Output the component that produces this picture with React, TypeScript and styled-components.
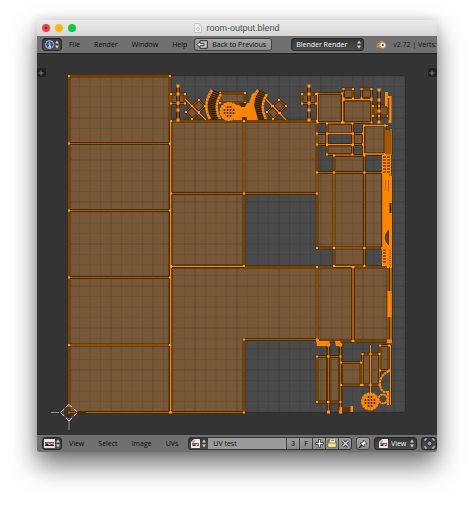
import React from "react";
import styled, { createGlobalStyle } from "styled-components";

const GlobalStyle = createGlobalStyle`
  * { box-sizing: border-box; }
  body { margin: 0; background: #fff; font-family: "Open Sans", "Noto Sans", sans-serif; }
  button, input, select { font: inherit; color: inherit; margin: 0; padding: 0; }
`;

const Page = styled.main`
  padding: 20px 37px 52px;
  overflow: hidden;
`;

const Window = styled.section`
  display: flex;
  flex-direction: column;
  border-radius: 4px 4px 2px 2px;
  box-shadow: 0 13px 26px rgba(0, 0, 0, 0.55), 0 0 10px rgba(0, 0, 0, 0.15);
`;

const TitleBar = styled.header`
  display: grid;
  grid-template-columns: 1fr auto 1fr;
  align-items: center;
  height: 16px;
  padding: 0 5px;
  border-radius: 4px 4px 0 0;
  background: linear-gradient(#ebebeb, #d6d6d6);
  font-family: "Liberation Sans", Arial, sans-serif;
`;

const Lights = styled.div`
  display: flex;
  gap: 5px;
`;

const Light = styled.button<{ $color: string }>`
  display: grid;
  place-items: center;
  width: 8px;
  height: 8px;
  border: 0;
  border-radius: 50%;
  background: ${(p) => p.$color};
`;

const EditedDot = styled.span`
  width: 2px;
  height: 2px;
  border-radius: 50%;
  background: #6b0d12;
`;

const Title = styled.h1`
  display: flex;
  align-items: center;
  gap: 4px;
  margin: 0;
  font-size: 9px;
  line-height: 12px;
  font-weight: 400;
  color: #4c4c4c;
`;

const Bar = styled.div<{ $bottom?: boolean }>`
  display: flex;
  align-items: center;
  height: ${(p) => (p.$bottom ? 17 : 18)}px;
  padding-left: 5px;
  overflow: hidden;
  white-space: nowrap;
  font-size: 7px;
  line-height: 10px;
  color: #0c0c0c;
  background: #707070;
  border-bottom: ${(p) => (p.$bottom ? "0" : "1px solid #222")};
  border-radius: ${(p) => (p.$bottom ? "0 0 2px 2px" : "0")};
`;

const Menus = styled.nav`
  display: flex;
  flex: none;
  gap: 14px;
  padding: 0 7px;
`;

const MenuButton = styled.button`
  border: 0;
  background: none;
`;

const DarkButton = styled.button<{ $width?: number }>`
  display: flex;
  flex: none;
  align-items: center;
  justify-content: space-evenly;
  width: ${(p) => p.$width ?? 20}px;
  height: 13px;
  border: 1px solid #262626;
  border-radius: 3px;
  background: linear-gradient(#3a3a3a, #505050);
`;

const SelectBox = styled.label<{ $width: number }>`
  display: flex;
  flex: none;
  align-items: center;
  gap: 3px;
  width: ${(p) => p.$width}px;
  height: 13px;
  padding: 0 2px 0 4px;
  border: 1px solid #262626;
  border-radius: 3px;
  background: linear-gradient(#363636, #4c4c4c);
  color: #f4f4f4;
`;

const Select = styled.select`
  flex: 1;
  min-width: 0;
  height: 11px;
  border: 0;
  appearance: none;
  background: none;
  line-height: 10px;
`;

const LightButton = styled.button`
  display: flex;
  flex: none;
  align-items: center;
  justify-content: center;
  gap: 4px;
  height: 13px;
  padding: 0 5px 0 1px;
  border: 1px solid #434343;
  border-radius: 3px;
  background: linear-gradient(#a3a3a3, #8c8c8c);
`;

const Engine = styled.div`
  display: flex;
  flex: none;
  padding: 0 12px 0 19px;
`;

const Stats = styled.div`
  display: flex;
  align-items: center;
  gap: 6px;
  color: #161616;
`;

const DataBlock = styled.div`
  display: flex;
  flex: 1;
  min-width: 0;
  height: 13px;
  margin-left: 3px;
  border: 1px solid #333;
  border-radius: 3px;
  overflow: hidden;
  background: #424242;
`;

const Browse = styled.button`
  display: flex;
  flex: none;
  align-items: center;
  justify-content: space-evenly;
  width: 19px;
  border: 0;
  background: linear-gradient(#363636, #4c4c4c);
`;

const NameInput = styled.input`
  flex: 1;
  min-width: 0;
  padding-left: 5px;
  border: 0;
  background: #9b9b9b;
`;

const Cell = styled.button`
  display: grid;
  flex: none;
  place-items: center;
  width: 13px;
  border: 0;
  border-left: 1px solid #444;
  background: linear-gradient(#9c9c9c, #888);
`;

const FooterTools = styled.div`
  display: flex;
  flex: none;
  gap: 4px;
  padding-left: 4px;
`;

const PinButton = styled(LightButton)`
  width: 14px;
  padding: 0;
`;

const Canvas = styled.svg`
  display: block;
  width: 100%;
  height: auto;
  background: #343434;
`;

type Box = [number, number, number, number];
type Point = [number, number];

const faces: Box[] = [
  [69, 76, 170, 143.5], [69, 143.5, 170, 210.5], [69, 210.5, 170, 277.5],
  [69, 277.5, 170, 345], [69, 345, 170, 412.5],
  [171, 121, 244, 193.5], [244, 121, 317, 193.5], [171, 193.5, 244, 266],
  [317, 267, 352.5, 341], [353.5, 267, 388, 341], [388, 267, 391, 341],
  [317, 172.5, 334, 248], [334, 155.5, 364.5, 172.5], [334, 172.5, 364.5, 248],
  [334, 248, 364.5, 266], [364.5, 172.5, 382.5, 248],
  [317.5, 93.5, 342, 122.5], [343.5, 100, 371.5, 122.5],
  [343.5, 89, 353, 98.5], [361.5, 89, 371.5, 98.5],
  [373, 106, 379, 116], [379, 106, 388, 116],
  [327, 123.5, 352.5, 133.5], [317, 133.5, 327, 144.5], [353, 133.5, 363, 144.5],
  [327, 145, 352.5, 154.5], [364, 125.5, 385, 154.5],
  [171, 94, 178, 103.5], [178, 94, 185, 103.5],
  [302, 94, 309, 103.5], [309, 94, 316, 103.5],
  [220, 93, 245, 103],
  [317, 356.5, 328, 402], [328.5, 356.5, 340.5, 402], [341, 362.5, 361, 385],
  [362.5, 354, 370.5, 385], [370.5, 354, 379.5, 385], [380, 345.5, 389, 370.5],
];

const polygons: Point[][] = [
  [[171, 267], [317, 267], [317, 339.5], [244, 339.5], [244, 412.5], [171, 412.5]],
  [[199, 100], [205, 106], [199, 112], [192, 106]],
  [[186, 112], [192, 106], [199, 113], [192, 119]],
  [[279, 100], [286, 106], [279, 113], [272, 106]],
  [[267, 112], [273, 106], [280, 113], [273, 119]],
];

const posts: Box[] = [
  [178, 86, 178, 120], [309, 86, 309, 120], [379, 90, 379, 122],
  [328.5, 345, 328.5, 412], [340.5, 345, 340.5, 412],
];

const postJoints: Point[] = [
  ...[86, 94, 103, 110, 120].flatMap((y): Point[] => [[178, y], [309, y]]),
  ...[90, 100, 111, 122].map((y): Point => [379, y]),
  [328.5, 345], [328.5, 412], [340.5, 345], [340.5, 412],
];

const brightLines = [
  "M170.7 121V412", "M171 266.4H244", "M334 266.4H353", "M185 99L206 120", "M266 99L286 120",
  "M317.5 93V122", "M342.7 93V123", "M344 99.5H372", "M327 133.5H353V144.7H327Z",
  "M363.5 125V154H391", "M364 125.5H388", "M370.5 345V395", "M390.4 345V405",
  "M391 267V341", "M391 129V155", "M391 176V267",
];

const ladder = (from: number, to: number) => {
  const rungs: number[] = [];
  for (let y = from; y <= to; y += 3) rungs.push(y);
  return rungs;
};

const gridLines = Array.from({ length: 33 }, (_, i) => i);
const fanSteps = Array.from({ length: 15 }, (_, i) => i / 14);

const Arrows = () => (
  <svg width="4" height="9" viewBox="0 0 4 9" aria-hidden="true">
    <path d="M0 3.5L2 .5L4 3.5ZM0 5.5L2 8.5L4 5.5Z" fill="#d0d0d0" />
  </svg>
);

const InfoIcon = () => (
  <svg width="9" height="9" viewBox="0 0 9 9" aria-hidden="true">
    <circle cx="4.5" cy="4.5" r="4" fill="#28538c" stroke="#a9c5e8" />
    <path d="M4.5 1.8V3M3.5 4H4.7V7M3.2 7H6" stroke="#fff" strokeWidth="1.1" />
  </svg>
);

const ImageEditorIcon = () => (
  <svg width="11" height="9" viewBox="0 0 11 9" aria-hidden="true">
    <rect x=".5" y=".5" width="10" height="8" fill="#f0e8e8" stroke="#dedede" />
    <path d="M1 3H10V5L8 4L6 5L4 4L1 5Z" fill="#934354" />
    <path d="M1 6L3 4L5 6L8 5L10 6V7H1Z" fill="#222" />
  </svg>
);

const ImageIcon = () => (
  <svg width="9" height="9" viewBox="0 0 9 9" aria-hidden="true">
    <path d="M3 .5H8.5V8.5H.5V3Z" fill="#e9e2e2" stroke="#eee" />
    <path d="M3 .5V3H.5" fill="none" stroke="#777" strokeWidth=".7" />
    <path d="M1 4H8V6L6 5L4 6L2 5L1 6Z" fill="#a54c5b" />
    <path d="M1 7L3 5L5 7L7 6L8 7Z" fill="#252525" />
  </svg>
);

const BackIcon = () => (
  <svg width="12" height="9" viewBox="0 0 12 9" aria-hidden="true">
    <path d="M4 2V.7H11.3V8.3H4V7" fill="#c6c6c6" stroke="#222" strokeWidth=".9" />
    <path d="M.7 4.5L4 1.8V3.4H8V5.6H4V7.2Z" fill="#eee" stroke="#222" strokeWidth=".8" />
  </svg>
);

const BlenderIcon = () => (
  <svg width="11" height="9" viewBox="0 0 11 9" aria-hidden="true">
    <path d="M.3 6.9L3.4 4.2H1.2V3H5L3.8 1.6L5 .6L9 3A3.6 3.2 0 1 1 3.2 6.4L1.3 7.8Z" fill="#ee9448" />
    <circle cx="6.8" cy="5.2" r="2.3" fill="#fff" />
    <circle cx="6.9" cy="5.2" r="1.1" fill="#275d91" />
  </svg>
);

const DocumentIcon = () => (
  <svg width="8" height="10" viewBox="0 0 8 10" aria-hidden="true">
    <path d="M.5.5H5L7.5 3V9.5H.5Z" fill="#f5f3ef" stroke="#b9b5af" strokeWidth=".7" />
    <path d="M5 .5V3H7.5" fill="none" stroke="#b9b5af" strokeWidth=".6" />
    <circle cx="4" cy="6" r="1.4" fill="none" stroke="#dfb18a" />
  </svg>
);

const PlusIcon = () => (
  <svg width="9" height="9" viewBox="0 0 9 9" aria-hidden="true">
    <path d="M3.5.5H5.5V3.5H8.5V5.5H5.5V8.5H3.5V5.5H.5V3.5H3.5Z" fill="#eee" stroke="#333" strokeWidth=".8" />
  </svg>
);

const FolderIcon = () => (
  <svg width="10" height="9" viewBox="0 0 10 9" aria-hidden="true">
    <path d="M1 3V1H4L5 2H9V8H1Z" fill="#b99d52" stroke="#4d4528" strokeWidth=".7" />
    <path d="M.5 4H9.5L8.8 8.5H1.2Z" fill="#efdf96" stroke="#65592d" strokeWidth=".6" />
    <path d="M3 .5H8V3.5H3Z" fill="#f4edd0" />
    <path d="M4 1.5H7" stroke="#555" strokeWidth=".7" />
  </svg>
);

const CloseIcon = () => (
  <svg width="9" height="9" viewBox="0 0 9 9" aria-hidden="true">
    <path d="M1.5 1.5L7.5 7.5M7.5 1.5L1.5 7.5" stroke="#222" strokeWidth="3" />
    <path d="M1.5 1.5L7.5 7.5M7.5 1.5L1.5 7.5" stroke="#eee" strokeWidth="1.4" />
  </svg>
);

const PinIcon = () => (
  <svg width="10" height="10" viewBox="0 0 10 10" aria-hidden="true">
    <path d="M1 9L4 6" stroke="#222" strokeWidth="1.2" />
    <path d="M5.5 1L9 4.5L7.5 4.7L6 6.3V8L2 4H3.8L5.3 2.5Z" fill="#eee" stroke="#222" strokeWidth=".7" />
  </svg>
);

const PivotIcon = () => (
  <svg width="11" height="11" viewBox="0 0 11 11" aria-hidden="true">
    <path d="M1 3V1H3M8 1H10V3M10 8V10H8M3 10H1V8" fill="none" stroke="#ccc" />
    <circle cx="5.5" cy="5.5" r="2.5" fill="#879fc0" stroke="#17243a" />
  </svg>
);

const Vertices = ({ points, size = 1.6 }: { points: Point[]; size?: number }) => (
  <path
    d={points.map(([x, y]) => `M${x - size / 2} ${y - size / 2}h${size}v${size}h-${size}z`).join("")}
    fill="#ff9a2c"
  />
);

const discCells = [-4.5, -1.5, 1.5, 4.5];

const GridDisc = ({ cx, cy, r }: { cx: number; cy: number; r: number }) => (
  <g>
    <circle cx={cx} cy={cy} r={r} fill="#f58208" stroke="#ff8c0a" strokeWidth="2" strokeDasharray="2.5 .6" />
    {discCells.flatMap((dx) =>
      discCells
        .filter((dy) => Math.abs(dx) + Math.abs(dy) < 8.5)
        .map((dy) => (
          <rect key={`${dx} ${dy}`} x={cx + dx - 0.8} y={cy + dy - 0.9} width="1.6" height="1.8" fill="#4a2900" />
        ))
    )}
  </g>
);

const Fan = ({ x }: { x: number }) => (
  <g transform={`translate(${x} 90)`}>
    <path d="M6 0Q-2 15 4 29L14 29Q7 16 15 4Z" fill="#6b4216" />
    {fanSteps.map((t) => {
      const bend = 4 * t * (1 - t);
      return (
        <path
          key={t}
          d={`M${6 - 2 * t - bend * 4} ${t * 29}L${15 - t - bend * 4} ${4 + t * 25}`}
          stroke="#201300"
          strokeWidth="1"
        />
      );
    })}
    <path d="M6 0Q-4 15 4 29" fill="none" stroke="#ff8b08" strokeWidth="2.6" strokeDasharray="2.8 .3" />
    <path d="M15 4Q7 16 14 29" fill="none" stroke="#ff8b08" strokeWidth="2.4" strokeDasharray="2.8 .3" />
  </g>
);

const boxPath = ([x1, y1, x2, y2]: Box) => `M${x1} ${y1}H${x2}V${y2}H${x1}Z`;
const polygonPath = (points: Point[]) => `M${points.map((p) => p.join(" ")).join("L")}Z`;
const facePath = faces.map(boxPath).join("") + polygons.map(polygonPath).join("");
const postPath = posts.map(([x1, y1, x2, y2]) => `M${x1} ${y1}L${x2} ${y2}`).join("");
const faceVertices = [
  ...faces.flatMap(([a, b, c, d]): Point[] => [[a, b], [c, b], [c, d], [a, d]]),
  ...polygons.flat(),
];

const UvCanvas = () => (
  <Canvas viewBox="37 54 400 381" role="img" aria-label="UV layout">
    <rect x="69" y="76" width="336" height="336" fill="#4a4a4a" />
    <path d={facePath} fill="#775839" />
    {gridLines.map((i) => (
      <path
        key={i}
        d={`M${69 + i * 10.5} 76V412M69 ${76 + i * 10.5}H405`}
        stroke="#000"
        strokeOpacity={i % 4 === 0 ? 0.16 : 0.06}
        strokeWidth="1"
      />
    ))}
    <path d={facePath} fill="none" stroke="#4a2a00" strokeWidth="2.8" />
    <path d={facePath} fill="none" stroke="#a45c0a" strokeWidth="1" />
    <path d={postPath} fill="none" stroke="#3e2200" strokeWidth="4" />
    <path d={postPath} fill="none" stroke="#b5640a" strokeWidth="1.4" />
    <path d={brightLines.join("")} fill="none" stroke="#3a2000" strokeWidth="2.8" />
    <path d={brightLines.join("")} fill="none" stroke="#f78b18" strokeWidth="1.3" />
    <Vertices points={faceVertices} size={2} />
    <Vertices points={postJoints} size={3} />

    <Fan x={206} />
    <Fan x={252} />
    <path d="M234 104L242 106L247 103H249L252 94L256 92L254 105L258 120H234V112Z" fill="#ff8500" />
    <path d="M239 103H247L245 107H241Z" fill="#4a2c08" />
    <path d="M242 117H247V120H242Z" fill="#5b350c" />
    <GridDisc cx={229} cy={111.5} r={8.5} />

    <path d="M385 92H388V96H391.5V123H388.5V106H385Z" fill="#ff8a0a" />
    <path d="M388.5 98V120" stroke="#653a09" strokeWidth="1.4" />
    <rect x="385" y="130" width="6" height="24" fill="#a65500" />

    <path d="M382 155H391V176H382ZM382 248H391V266H382Z" fill="#ff8700" />
    {[...ladder(157, 175), ...ladder(250, 264)].map((y) => (
      <path key={y} d={`M383 ${y}H390`} stroke="#593006" strokeWidth="1.2" />
    ))}
    <path d="M386.5 155V176M386.5 248V266" stroke="#ff8700" />
    <path d="M382.5 174H389V176H392V267H387V248H382.5Z" fill="#ff8700" />
    <path d="M385.5 180V191M388.5 180V192" stroke="#a65500" strokeWidth=".8" />
    <rect x="389.5" y="203" width="2" height="10" fill="#3a2813" />
    <path d="M388.5 230Q382 238 388.5 245Z" fill="#484848" stroke="#653708" />
    <path d="M390 250V265" stroke="#704008" strokeDasharray="1 1" />

    <rect x="387.5" y="291" width="4" height="26" fill="#ff8700" />
    <path d="M387 339.5H392V343H387ZM316 339H319V341H329.5V346H317ZM335 341H340L342 346H336Z" fill="#ff8700" />

    <path d="M389 371Q379 376 380 385Q381 393 388 392V405" fill="none" stroke="#ff8a0a" strokeWidth="2" strokeDasharray="2.6 .5" />
    <circle cx="383" cy="399" r="4.5" fill="#55483b" stroke="#ff8a0a" strokeWidth="1.8" strokeDasharray="2.5 .5" />
    <GridDisc cx={370} cy={401.5} r={8} />
    <rect x="341" y="407" width="11" height="5" fill="#653307" />
    <path d="M339.5 407H342V413H339.5ZM350.5 406H353V412H350.5Z" fill="#ff8a0a" />

    <g fill="none">
      <path d="M51 412.5H59M69 421V430" stroke="#929292" />
      <circle cx="69" cy="412.5" r="6" stroke="#a94b43" strokeWidth="1" />
      <path d="M66 407L69 404.500L72 407M66 418L69 421L72 418M64 409L60.5 412.5L64 416M74 409L77.5 412.5L74 416" stroke="#dfcfcf" />
      <path d="M69 407V418M75 412.5H86" stroke="#211a16" strokeWidth=".7" />
    </g>

    {[37, 428].map((x) => (
      <g key={x}>
        <rect x={x} y="68" width="9" height="9" rx="2" fill="#202020" />
        <path d={`M${x + 4} 70.5V75.5M${x + 1.5} 73H${x + 6.5}`} stroke="#808080" />
      </g>
    ))}
  </Canvas>
);

export default function App() {
  return (
    <>
      <GlobalStyle />
      <Page>
        <Window>
          <TitleBar>
            <Lights>
              <Light $color="#ed4247" aria-label="Close"><EditedDot /></Light>
              <Light $color="#fdb512" aria-label="Minimize" />
              <Light $color="#13c845" aria-label="Zoom" />
            </Lights>
            <Title><DocumentIcon />room-output.blend</Title>
          </TitleBar>

          <Bar>
            <DarkButton aria-label="Editor type"><InfoIcon /><Arrows /></DarkButton>
            <Menus>
              {["File", "Render", "Window", "Help"].map((name) => (
                <MenuButton key={name}>{name}</MenuButton>
              ))}
            </Menus>
            <LightButton><BackIcon />Back to Previous</LightButton>
            <Engine>
              <SelectBox $width={73}>
                <Select aria-label="Render engine"><option>Blender Render</option></Select>
                <Arrows />
              </SelectBox>
            </Engine>
            <Stats><BlenderIcon /><span>v2.72 | Verts:</span></Stats>
          </Bar>

          <UvCanvas />

          <Bar $bottom>
            <DarkButton aria-label="Editor type"><ImageEditorIcon /><Arrows /></DarkButton>
            <Menus>
              {["View", "Select", "Image", "UVs"].map((name) => (
                <MenuButton key={name}>{name}</MenuButton>
              ))}
            </Menus>
            <DataBlock>
              <Browse aria-label="Browse images"><ImageIcon /><Arrows /></Browse>
              <NameInput aria-label="Image name" defaultValue="UV test" />
              <Cell aria-label="Number of users">3</Cell>
              <Cell aria-label="Fake user">F</Cell>
              <Cell aria-label="New image"><PlusIcon /></Cell>
              <Cell aria-label="Open image"><FolderIcon /></Cell>
              <Cell aria-label="Unlink"><CloseIcon /></Cell>
            </DataBlock>
            <FooterTools>
              <PinButton aria-label="Pin"><PinIcon /></PinButton>
              <SelectBox $width={43}>
                <ImageIcon />
                <Select aria-label="Editor mode"><option>View</option></Select>
                <Arrows />
              </SelectBox>
              <DarkButton $width={16} aria-label="Pivot"><PivotIcon /></DarkButton>
            </FooterTools>
          </Bar>
        </Window>
      </Page>
    </>
  );
}
